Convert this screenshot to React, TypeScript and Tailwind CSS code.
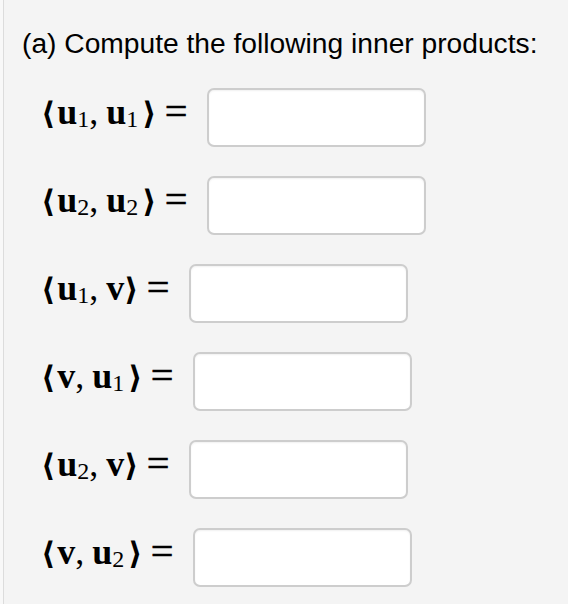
import type { ReactNode } from "react";

// Math bits set in Times-like metrics, MathJax style (bold vectors, roman subscripts).
function Open() {
  return <span className="-ml-[2px] font-['DejaVu_Serif',serif] font-bold text-[31px]">⟨</span>;
}

function Close({ gap = false }: { gap?: boolean }) {
  return (
    <span className={`font-['DejaVu_Serif',serif] font-bold text-[31px] ${gap ? "ml-[4px]" : "ml-0"}`}>⟩</span>
  );
}

function Vec({ name, sub }: { name: string; sub?: string }) {
  return (
    <span className="ml-[2px]">
      <span className="font-bold">{name}</span>
      {sub ? <span className="text-[24px] align-[-3px]">{sub}</span> : null}
    </span>
  );
}

function Comma() {
  return <span className="mr-[6px]">,</span>;
}

function Row({ children }: { children: ReactNode }) {
  return (
    <div className="flex items-center">
      <span className="mb-[5px] flex items-baseline font-['Liberation_Serif',serif] text-[36px] leading-[32px] text-black">
        {children}
        <span className="ml-[10px] inline-block scale-x-[1.12] scale-y-[1.1] [-webkit-text-stroke:0.5px_black]">=</span>
      </span>
      <div className="ml-[20px] h-[59px] w-[219px] rounded-[7px] border-2 border-[#cdcdcd] bg-white shadow-[inset_0_1px_2px_rgba(0,0,0,0.06)]" />
    </div>
  );
}

export default function App() {
  return (
    <div className="min-h-[604px] w-[568px] bg-[#f8f8f8] pl-[3px]">
      <div className="min-h-[604px] border-l border-[#dcdcdc] bg-[#f4f4f4] pl-[18px] pt-[27px]">
        <h2 className="font-['Liberation_Sans',Arial,sans-serif] text-[28.2px] leading-[32px] text-black">
          (a) Compute the following inner products:
        </h2>
        <div className="mt-[29px] flex flex-col gap-[29px] pl-[21px]">
          <Row>
            <Open />
            <Vec name="u" sub="1" />
            <Comma />
            <Vec name="u" sub="1" />
            <Close gap />
          </Row>
          <Row>
            <Open />
            <Vec name="u" sub="2" />
            <Comma />
            <Vec name="u" sub="2" />
            <Close gap />
          </Row>
          <Row>
            <Open />
            <Vec name="u" sub="1" />
            <Comma />
            <Vec name="v" />
            <Close />
          </Row>
          <Row>
            <Open />
            <Vec name="v" />
            <Comma />
            <Vec name="u" sub="1" />
            <Close gap />
          </Row>
          <Row>
            <Open />
            <Vec name="u" sub="2" />
            <Comma />
            <Vec name="v" />
            <Close />
          </Row>
          <Row>
            <Open />
            <Vec name="v" />
            <Comma />
            <Vec name="u" sub="2" />
            <Close gap />
          </Row>
        </div>
      </div>
    </div>
  );
}
